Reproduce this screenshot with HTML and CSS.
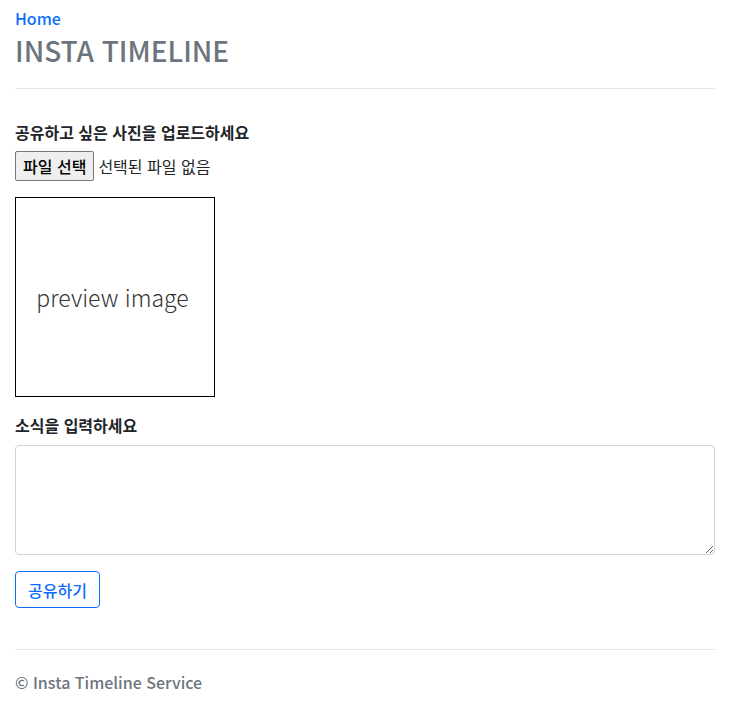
FILE: index.html
```html
<!DOCTYPE html>
<html lang="ko">
<head>
<meta charset="utf-8">
<title>INSTA TIMELINE</title>
<link rel="stylesheet" href="styles.css">
</head>
<body>
<div class="container">
  <header class="header">
    <a class="home" href="#">Home</a>
    <h1 class="title">INSTA TIMELINE</h1>
  </header>
  <hr class="rule">
  <form class="form">
    <label class="label">공유하고 싶은 사진을 업로드하세요</label>
    <div class="file-row">
      <button type="button" class="file-btn">파일 선택</button>
      <span class="file-name">선택된 파일 없음</span>
    </div>
    <div class="preview">preview image</div>
    <label class="label label-news">소식을 입력하세요</label>
    <textarea class="news"></textarea>
    <button type="button" class="share">공유하기</button>
  </form>
  <hr class="rule rule-foot">
  <footer class="footer">© Insta Timeline Service</footer>
</div>
</body>
</html>
```
FILE: styles.css
```css
* { box-sizing: border-box; }
body {
  margin: 0;
  font-family: "Noto Sans CJK KR", "Noto Sans", sans-serif;
  font-size: 16px;
  color: #212529;
  background: #fff;
}
.container {
  padding: 0 18px 0 15px;
  width: 733px;
}
.header {
  display: flex;
  flex-direction: column;
  padding-top: 6px;
}
.home {
  color: #0d6efd;
  text-decoration: none;
  font-weight: 500;
  font-size: 16px;
  line-height: 24px;
}
.title {
  margin: 0;
  font-size: 28px;
  font-weight: 500;
  color: #6c757d;
  line-height: 40px;
}
.rule {
  border: 0;
  border-top: 1px solid #e3e5e7;
  margin: 18px 0 0;
}
.form {
  display: flex;
  flex-direction: column;
  align-items: flex-start;
  padding-top: 31px;
}
.label {
  font-weight: 700;
  font-size: 16px;
  line-height: 24px;
}
.file-row {
  display: flex;
  align-items: center;
  gap: 4px;
  margin-top: 7px;
}
.file-btn {
  font-family: inherit;
  font-size: 16px;
  font-weight: 500;
  color: #000;
  background: #efefef;
  border: 1px solid #767676;
  border-radius: 2px;
  height: 30px;
  padding: 0 7px;
}
.file-name {
  font-size: 16px;
}
.preview {
  margin-top: 16px;
  width: 200px;
  height: 200px;
  border: 1px solid #000;
  display: flex;
  align-items: center;
  justify-content: center;
  padding-right: 5px;
  font-size: 23px;
  font-weight: 300;
  color: #333;
}
.label-news {
  margin-top: 16px;
}
.news {
  margin-top: 8px;
  width: 100%;
  height: 110px;
  border: 1px solid #ced4da;
  border-radius: 4px;
  resize: vertical;
  font-family: inherit;
}
.share {
  margin-top: 16px;
  font-family: inherit;
  font-size: 16px;
  font-weight: 500;
  color: #0d6efd;
  background: #fff;
  border: 1px solid #0d6efd;
  border-radius: 4px;
  height: 37px;
  padding: 0 12px;
}
.rule-foot {
  margin-top: 41px;
}
.footer {
  padding-top: 20px;
  font-weight: 500;
  font-size: 16px;
  color: #6c757d;
  line-height: 24px;
}
```
